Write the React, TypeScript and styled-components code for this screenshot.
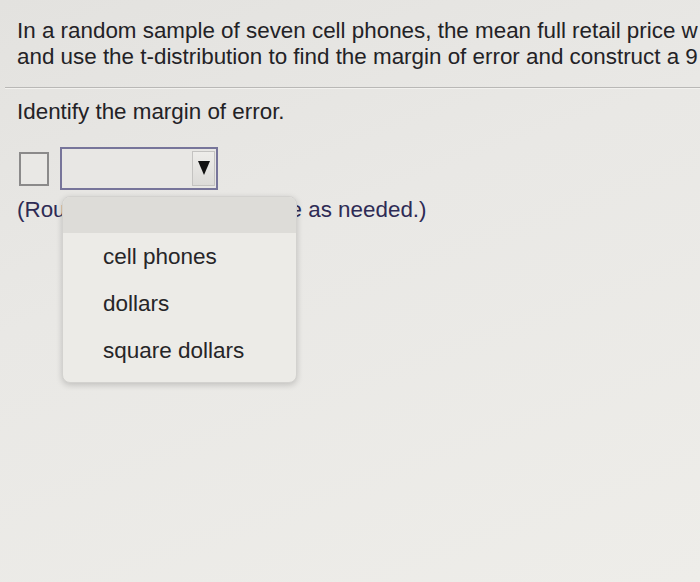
import styled, { createGlobalStyle } from 'styled-components';

const GlobalStyle = createGlobalStyle`
    html, body {
        margin: 0;
        padding: 0;
    }
    body {
        width: 700px;
        height: 582px;
        overflow: hidden;
        font-family: 'Liberation Sans', Arial, sans-serif;
    }
`;

const options = ['cell phones', 'dollars', 'square dollars'];

function App() {
    return (
        <Page>
            <GlobalStyle />
            <Question>
                <Line>In a random sample of seven cell phones, the mean full retail price w</Line>
                <Line>and use the t-distribution to find the margin of error and construct a 9</Line>
            </Question>
            <Divider />
            <Prompt>Identify the margin of error.</Prompt>
            <AnswerRow>
                <AnswerBox />
                <SelectWrap>
                    <SelectBox>
                        <ArrowButton>
                            <Arrow />
                        </ArrowButton>
                    </SelectBox>
                    <Popup>
                        <PopupHeader />
                        {options.map((o) => (
                            <Option key={o}>{o}</Option>
                        ))}
                    </Popup>
                </SelectWrap>
            </AnswerRow>
            <Note>(Round to one decimal place as needed.)</Note>
        </Page>
    );
}

const Page = styled.div`
    width: 700px;
    height: 582px;
    box-sizing: border-box;
    padding: 18px 0 0 0;
    background: linear-gradient(160deg, #e3e2df 0%, #e9e8e5 40%, #eeede9 100%);
    color: #232226;
    overflow: hidden;
`;

const Question = styled.div`
    padding-left: 17px;
    font-size: 22.4px;
    line-height: 26px;
`;

const Line = styled.div`
    white-space: nowrap;
    overflow: hidden;
`;

const Divider = styled.div`
    margin: 17px 0 0 5px;
    height: 1px;
    background: #b9b8b6;
    box-shadow: 0 1px 0 #f2f1ee;
`;

const Prompt = styled.div`
    padding: 11px 0 0 17px;
    font-size: 22.4px;
    line-height: 26px;
`;

const AnswerRow = styled.div`
    display: flex;
    align-items: center;
    gap: 11px;
    margin: 22px 0 0 19px;
`;

const AnswerBox = styled.div`
    width: 26px;
    height: 30px;
    border: 2px solid #8b8a8a;
    background: #e9e8e5;
`;

const SelectWrap = styled.div`
    position: relative;
`;

const SelectBox = styled.div`
    width: 153px;
    height: 39px;
    border: 2px solid #77759a;
    display: flex;
    justify-content: flex-end;
    align-items: center;
    padding-right: 1px;
    background: #e8e7e4;
`;

const ArrowButton = styled.div`
    width: 23px;
    height: 35px;
    box-sizing: border-box;
    border: 1px solid #c4c3c1;
    background: linear-gradient(#eeedea, #dcdbd8);
    display: flex;
    justify-content: center;
    align-items: center;
`;

const Arrow = styled.div`
    width: 0;
    height: 0;
    border-left: 6.5px solid transparent;
    border-right: 6.5px solid transparent;
    border-top: 14px solid #111;
    margin-top: -2px;
`;

const Popup = styled.div`
    position: absolute;
    left: 2px;
    top: 49px;
    width: 233px;
    height: 185px;
    border-radius: 8px;
    background: #ecebe7;
    border: 1px solid #d3d2cf;
    box-shadow: 0 2px 6px rgba(0, 0, 0, 0.18);
    overflow: hidden;
    z-index: 2;
`;

const PopupHeader = styled.div`
    height: 36px;
    background: #dddcd8;
    margin-bottom: 12px;
`;

const Option = styled.div`
    padding-left: 40px;
    height: 47px;
    font-size: 22.5px;
    line-height: 24px;
    color: #262528;
`;

const Note = styled.div`
    padding: 7px 0 0 17px;
    font-size: 22.4px;
    line-height: 26px;
    color: #2e2b55;
`;

export default App;
